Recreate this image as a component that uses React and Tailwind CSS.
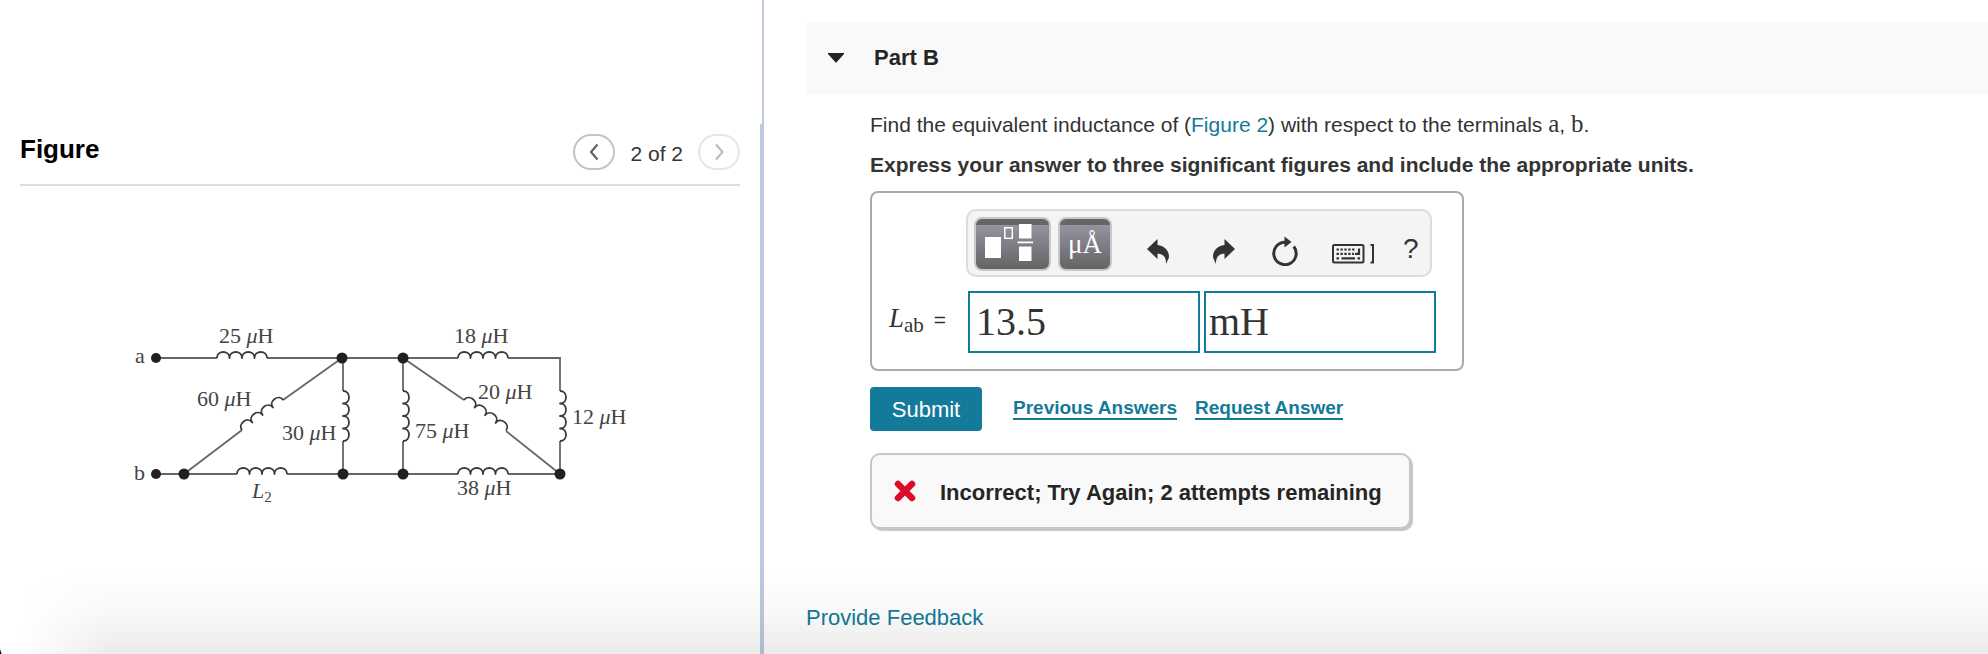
import React from "react";

function Coil({ x, y, angle = 0, length = 50 }) {
  const n = length / 4;
  const one = `c0 -8 ${n} -8 ${n} 0`;
  return (
    <path
      transform={`translate(${x} ${y}) rotate(${angle})`}
      d={`M0 0${one}${one}${one}${one}`}
      strokeLinejoin="round"
    />
  );
}

function Label({ x, y, value }) {
  return (
    <text x={x} y={y}>
      {value} <tspan fontStyle="italic">μ</tspan>H
    </text>
  );
}

function Circuit() {
  return (
    <svg
      viewBox="130 320 500 184"
      className="block w-[500px] max-w-full"
      role="img"
      aria-label="Inductor network between terminals a and b"
    >
      <g fill="none" stroke="#666" strokeWidth="1.8">
        <path d="M156 357H217M267 357H458M508 357H560V390M560 440V473" />
        <path d="M156 473H237M287 473H458M508 473H560" />
        <path d="M343 357V390M343 440V473M403 357V390M403 440V473" />
        <path d="M184 473L242 429M283 399L342 357M403 357L464 399M506 430L560 473" />
      </g>
      <g fill="none" stroke="#3a3a3a" strokeWidth="1.8">
        <Coil x={217} y={357} />
        <Coil x={237} y={473} />
        <Coil x={458} y={357} />
        <Coil x={458} y={473} />
        <Coil x={343} y={390} angle={90} />
        <Coil x={403} y={390} angle={90} />
        <Coil x={560} y={390} angle={90} />
        <Coil x={242} y={429} angle={-36} length={51} />
        <Coil x={464} y={399} angle={36} length={52} />
      </g>
      <g fill="#231f20">
        <circle cx="156" cy="357" r="5" />
        <circle cx="342" cy="357" r="5.5" />
        <circle cx="403" cy="357" r="5.5" />
        <circle cx="156" cy="473" r="5" />
        <circle cx="184" cy="473" r="5.5" />
        <circle cx="343" cy="473" r="5.5" />
        <circle cx="403" cy="473" r="5.5" />
        <circle cx="560" cy="473" r="5.5" />
      </g>
      <g fill="#444" fontFamily="Liberation Serif, serif" fontSize="22">
        <text x="135" y="362">a</text>
        <text x="134" y="479">b</text>
        <Label x={219} y={342} value="25" />
        <Label x={197} y={405} value="60" />
        <Label x={282} y={439} value="30" />
        <Label x={454} y={342} value="18" />
        <Label x={478} y={398} value="20" />
        <Label x={415} y={437} value="75" />
        <Label x={572} y={423} value="12" />
        <Label x={457} y={494} value="38" />
        <text x="252" y="497" fontStyle="italic">
          L
          <tspan fontStyle="normal" fontSize="15" dy="4">2</tspan>
        </text>
      </g>
    </svg>
  );
}

function PageButton({ label, d, disabled }) {
  return (
    <button
      aria-label={label}
      disabled={disabled}
      className={
        "flex h-9 w-[42px] items-center justify-center rounded-[18px] border-2 " +
        (disabled ? "border-[#e6e6e6] text-[#bdbdbd]" : "border-[#c4c4c4] text-[#5f6364]")
      }
    >
      <svg width="12" height="18" viewBox="0 0 12 18" fill="none" stroke="currentColor" strokeWidth="2.2">
        <path d={d} />
      </svg>
    </button>
  );
}

const toolKey =
  "flex h-[54px] items-center justify-center rounded-lg border-2 border-[#c9c9c9] bg-[linear-gradient(#666_0_6px,#9593a0_6px,#646464)]";

function Toolbar() {
  return (
    <div className="flex h-[68px] w-[466px] rounded-[10px] border-2 border-[#dcdcdc] bg-[#f4f4f4] pt-[6px] pl-[6px] text-[#333]">
      <button aria-label="Templates" className={toolKey + " w-[77px]"}>
        <svg width="73" height="50" viewBox="0 0 73 50" fill="#fff">
          <rect x="9" y="18" width="16" height="21" />
          <rect x="28.8" y="8.800" width="7.500" height="10.500" fill="none" stroke="#fff" strokeWidth="1.5" />
          <rect x="43" y="5" width="12.5" height="14.5" />
          <rect x="41.500" y="22.5" width="15.5" height="1.8" />
          <rect x="43" y="27.5" width="12.5" height="14.5" />
        </svg>
      </button>
      <button
        aria-label="Units and symbols"
        className={toolKey + " ml-[7px] w-[54px] font-['Liberation_Serif',serif] text-[27px] leading-8 text-white"}
      >
        μÅ
      </button>
      <button aria-label="Undo" className="ml-[34px] h-[54px] pt-[15px]">
        <svg width="24" height="28" viewBox="0 0 24 28" fill="currentColor">
          <path d="M11.5 1V7C19.5 8 23.8 14 22.8 20L20 26Q20.5 16 11.5 15.5V21L1 11Z" />
        </svg>
      </button>
      <button aria-label="Redo" className="ml-[42px] h-[54px] pt-[15px]">
        <svg width="24" height="28" viewBox="0 0 24 28" fill="currentColor">
          <path d="M12.5 1V7C4.5 8 0.2 14 1.2 20L4 26Q3.5 16 12.5 15.5V21L23 11Z" />
        </svg>
      </button>
      <button aria-label="Reset" className="ml-[35px] h-[54px] pt-[13px]">
        <svg width="28" height="30" viewBox="0 0 28 30">
          <path d="M14 6.2A11.2 11.2 0 1 0 22.8 10.5" fill="none" stroke="currentColor" strokeWidth="3" />
          <path d="M13.5 0.5L20.5 6L13.5 11.5Z" fill="currentColor" />
        </svg>
      </button>
      <button aria-label="Keyboard shortcuts" className="ml-[33px] flex h-[54px] pt-[26px]">
        <svg width="43" height="22" viewBox="0 0 43 22" fill="none" stroke="currentColor">
          <rect x="1" y="2" width="30.5" height="17.5" rx="1.5" strokeWidth="2" />
          <path d="M4.5 6.5H24M4.5 10.8H22" strokeWidth="2.2" strokeDasharray="2.4 1.5" />
          <path d="M27 5.5V10.8H23M4.5 15.3H7M9.5 15.3H23M25.5 15.3H28" strokeWidth="2.2" />
          <path d="M38.5 2H41V19.5H38.5" strokeWidth="2" />
        </svg>
      </button>
      <button aria-label="Help" className="ml-[28px] h-[54px] pt-[10px] text-[28px] leading-10">
        ?
      </button>
    </div>
  );
}

const field =
  "h-[62px] w-[232px] border-2 border-[#147a99] bg-white font-['Liberation_Serif',serif] text-[40px] text-[#333] outline-none";
const serif = "font-['Liberation_Serif',serif]";

export default function App() {
  return (
    <div className="relative flex min-h-screen bg-white font-['Liberation_Sans',Arial,sans-serif] text-[#333]">
      <aside className="flex w-[764px] max-w-[40%] shrink-0 flex-col">
        <div className="h-[124px] border-r-2 border-[#bccadb]" />
        <div className="flex-1 border-r-4 border-[#bccadb] pr-5 pl-5">
          <header className="flex h-[62px] items-start justify-between border-b-2 border-[#dedede] pt-[10px]">
            <h2 className="text-[26px] leading-[30px] font-bold text-black">Figure</h2>
            <nav className="flex items-center gap-[15px]" aria-label="Figure pages">
              <PageButton label="Previous figure" d="M9.5 1.5L3 9L9.5 16.5" />
              <span className="pt-1 text-[21px] leading-6">2 of 2</span>
              <PageButton label="Next figure" d="M3 1.5L9.5 9L3 16.5" disabled />
            </nav>
          </header>
          <div className="pt-[135px] pl-[110px]">
            <Circuit />
          </div>
        </div>
      </aside>

      <main className="min-w-0 flex-1 pt-[22px] pl-[42px]">
        <header className="flex h-[72px] items-center bg-[#f9f9f9] pl-[22px]">
          <button aria-label="Collapse Part B" className="mr-[30px]">
            <svg width="16" height="10" viewBox="0 0 16 10" fill="#222">
              <path d="M0 0H16V1L8.8 9Q8 10 7.2 9L0 1Z" />
            </svg>
          </button>
          <h2 className="text-[22px] leading-7 font-bold text-[#252525]">Part B</h2>
        </header>

        <section className="pl-16">
          <p className="pt-[14px] text-[21px] leading-8">
            Find the equivalent inductance of (
            <a href="#figure-2" className="text-[#147a99]">Figure 2</a>) with respect to the terminals{" "}
            <span className={serif + " text-[25px]"}>a</span>,{" "}
            <span className={serif + " text-[25px]"}>b</span>.
          </p>
          <p className="pt-2 text-[21px] leading-8 font-bold">
            Express your answer to three significant figures and include the appropriate units.
          </p>

          <form onSubmit={(e) => e.preventDefault()}>
            <div className="mt-[10px] h-[180px] w-[594px] rounded-lg border-2 border-[#aaa] pt-4 pl-[17px]">
              <div className="pl-[77px]">
                <Toolbar />
              </div>
              <div className="flex items-center pt-[14px]">
                <label htmlFor="value" className={serif + " w-[79px] shrink-0 pb-2 text-[27px]"}>
                  <i>L</i>
                  <sub className="text-[21px]">ab</sub>
                  <span className="ml-[10px] font-['Liberation_Sans',sans-serif] text-[21px]">=</span>
                </label>
                <input id="value" defaultValue="13.5" className={field + " pl-[6px] pb-[2px]"} />
                <input aria-label="Units" defaultValue="mH" className={field + " ml-1 pl-[3px] pb-[2px]"} />
              </div>
            </div>

            <div className="mt-4 flex items-center">
              <button className="h-11 w-28 rounded bg-[#147a99] text-[22px] text-white">Submit</button>
              <a
                href="#previous"
                className="ml-[31px] border-b-2 border-[#147a99] text-[19px] leading-5 font-bold text-[#147a99]"
              >
                Previous Answers
              </a>
              <a
                href="#request"
                className="ml-[18px] border-b-2 border-[#147a99] text-[19px] leading-5 font-bold text-[#147a99]"
              >
                Request Answer
              </a>
            </div>
          </form>

          <div
            role="status"
            className="mt-[22px] flex h-[76px] w-[541px] items-center rounded-[10px] border-2 border-[#c6c6c6] bg-[#f9f9f9] pl-[22px] shadow-[2px_2px_1px_#c6c6c6]"
          >
            <svg width="22" height="22" viewBox="0 0 22 22" fill="none" stroke="#dd0a28" strokeWidth="6.500">
              <path d="M4 4L18 18M18 4L4 18" strokeLinecap="round" strokeLinejoin="round" />
            </svg>
            <span className="ml-6 pt-[2px] text-[22px] font-bold text-[#252525]">
              Incorrect; Try Again; 2 attempts remaining
            </span>
          </div>
        </section>

        <a href="#feedback" className="mt-[73px] mb-[21px] inline-block text-[22px] leading-8 text-[#147a99]">
          Provide Feedback
        </a>
      </main>

      <div className="pointer-events-none absolute inset-x-0 bottom-0 h-[90px] bg-[linear-gradient(transparent,#00000006_50%,#00000014)] [mask-image:linear-gradient(to_right,transparent_20px,black_110px)]" />
      <svg width="2" height="6" viewBox="0 0 2 6" className="pointer-events-none absolute bottom-0 left-0" aria-hidden="true">
        <path d="M0 0Q1 3 2 6H0Z" fill="#111" />
      </svg>
    </div>
  );
}
